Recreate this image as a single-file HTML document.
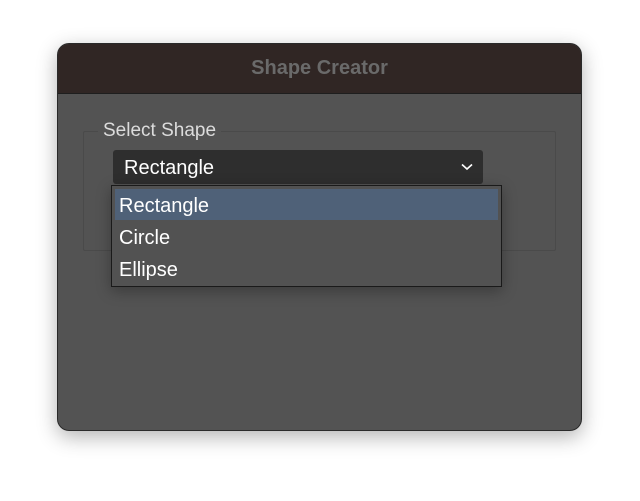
<!DOCTYPE html>
<html><head><style>
body{margin:0;width:640px;height:501px;background:#fff;font-family:"Liberation Sans",sans-serif;position:relative;overflow:hidden}
.win{position:absolute;left:57px;top:43px;width:525px;height:388px;background:#535353;border:1px solid #2a2a2a;border-radius:12px;box-sizing:border-box;overflow:hidden;box-shadow:0 6px 20px rgba(0,0,0,.3)}
.title{height:49px;background:#302624;border-bottom:1px solid #1e1e1e;color:#6a6a6a;font-weight:bold;font-size:20px;text-align:center;line-height:48px}
.fs{position:absolute;left:83px;top:131px;width:473px;height:120px;border:1px solid #4a4a4a;box-sizing:border-box;border-radius:2px}
.leg{position:absolute;left:98px;top:120px;background:#535353;padding:0 5px;color:#dcdcdc;font-size:19px}
.sel{position:absolute;left:113px;top:150px;width:370px;height:34px;background:#2e2e2e;border-radius:3px;color:#fff;font-size:20px;line-height:37px;padding-left:11px;box-sizing:border-box}
.dd{position:absolute;left:111px;top:185px;width:391px;height:102px;background:#525252;border:1px solid #1a1a1a;box-sizing:border-box;box-shadow:0 4px 14px rgba(0,0,0,.3)}
.it{position:absolute;left:3px;width:383px;height:31px;color:#fff;font-size:20px;line-height:34px;padding-left:4px;box-sizing:border-box}
</style></head><body>
<div class="win"><div class="title">Shape Creator</div></div>
<div class="fs"></div>
<div class="leg">Select Shape</div>
<div class="sel">Rectangle<svg style="position:absolute;right:10px;top:13px" width="12" height="8"><path d="M1 1.5L6 6L11 1.5" stroke="#fff" stroke-width="1.6" fill="none"/></svg></div>
<div class="dd">
<div class="it" style="top:3px;background:#4f6178">Rectangle</div>
<div class="it" style="top:35px">Circle</div>
<div class="it" style="top:67px">Ellipse</div>
</div>
</body></html>
